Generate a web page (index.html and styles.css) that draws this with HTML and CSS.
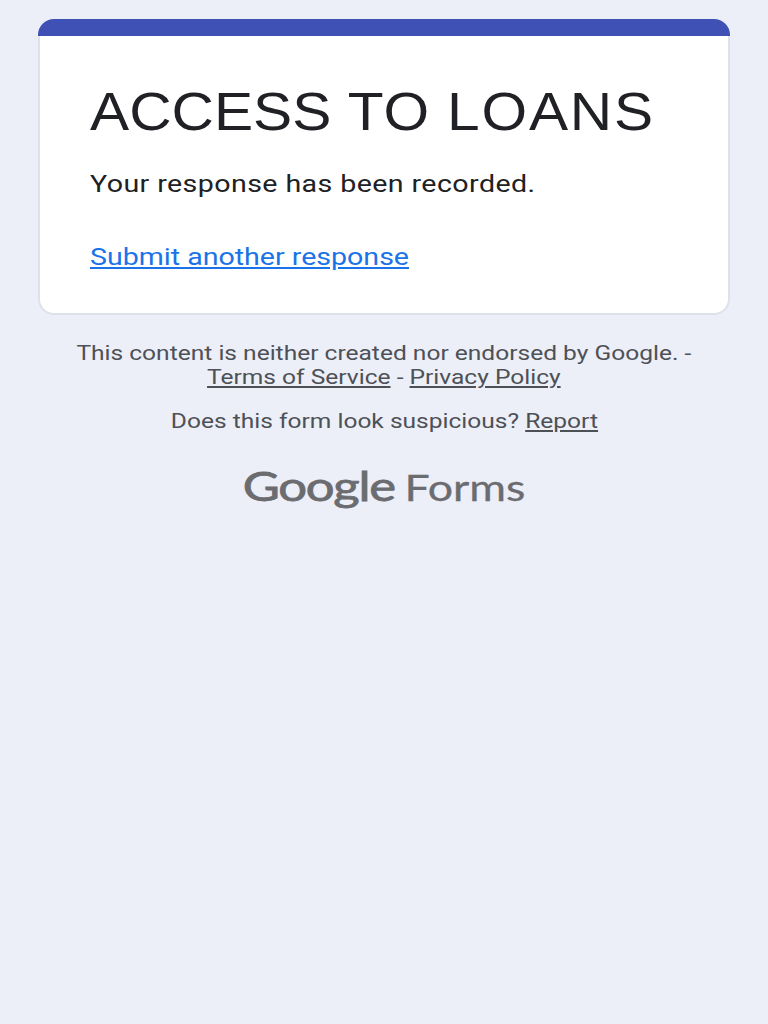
FILE: index.html
```html
<!DOCTYPE html>
<html lang="en">
<head>
<meta charset="utf-8">
<title>ACCESS TO LOANS</title>
<link rel="stylesheet" href="styles.css">
</head>
<body>
<main class="page">
  <section class="card">
    <div class="card-accent"></div>
    <div class="card-body">
      <h1 class="title">ACCESS TO <span class="title-end">LOANS</span></h1>
      <p class="confirmation">Your response has been recorded.</p>
      <a class="another" href="#">Submit another response</a>
    </div>
  </section>
  <footer class="footer">
    <p class="disclaimer">This content is neither created nor endorsed by Google. - <br><a href="#">Terms of Service</a> - <a href="#">Privacy Policy</a></p>
    <p class="report">Does this form look suspicious? <a href="#">Report</a></p>
    <div class="logo"><span class="logo-google">Google</span> <span class="logo-forms">Forms</span></div>
  </footer>
</main>
</body>
</html>
```
FILE: styles.css
```css
html, body {
  margin: 0;
  height: 100%;
}
body {
  background: #eceef8;
  font-family: Roboto, "Liberation Sans", sans-serif;
  min-height: 1024px;
  overflow-x: hidden;
}
.page {
  padding: 19px 38px 0;
}
.card {
  background: #fff;
  border-radius: 16px;
  box-sizing: border-box;
  height: 296px;
  border: 2px solid #dfe1e8;
  border-top: 0;
  display: flex;
  flex-direction: column;
}
.card-accent {
  height: 17px;
  margin: 0 -2px;
  border-radius: 16px 16px 0 0;
  background: #3f51b5;
  flex: none;
}
.card-body {
  padding: 0 50px;
}
.title {
  width: fit-content;
  margin: 44px 0 0;
  font-family: "Liberation Sans", Arial, sans-serif;
  font-weight: 400;
  font-size: 53.5px;
  line-height: 64px;
  font-kerning: none;
  color: #202124;
  white-space: nowrap;
  transform: scaleX(1.097);
  transform-origin: left center;
}
.title-end {
  letter-spacing: 1.6px;
  margin-left: 1.5px;
}
.confirmation {
  width: fit-content;
  margin: 23px 0 0;
  font-size: 24px;
  line-height: 34px;
  letter-spacing: 0.36px;
  color: #202124;
  white-space: nowrap;
  transform: scaleX(1.19);
  transform-origin: left center;
}
.another {
  display: inline-block;
  margin-top: 39px;
  font-size: 24px;
  line-height: 34px;
  color: #1a73e8;
  white-space: nowrap;
  transform: scaleX(1.19);
  transform-origin: left center;
}
.footer {
  text-align: center;
  color: #4d5156;
  font-size: 20.5px;
  line-height: 24px;
  white-space: nowrap;
}
.footer a {
  color: inherit;
}
.disclaimer {
  width: fit-content;
  margin: 26px auto 0;
  transform: scaleX(1.197);
}
.report {
  width: fit-content;
  margin: 20px auto 0;
  transform: scaleX(1.197);
}
.logo {
  width: fit-content;
  margin: 28px auto 0;
  color: #6b6c70;
  font-family: Lato, sans-serif;
  font-size: 36px;
  line-height: 50px;
  word-spacing: -1.5px;
  transform: scaleX(1.24);
}
.logo-google {
  font-size: 41px;
  letter-spacing: -1px;
  -webkit-text-stroke: 0.8px #6b6c70;
}
.logo-forms {
  -webkit-text-stroke: 0.3px #6b6c70;
}
```
